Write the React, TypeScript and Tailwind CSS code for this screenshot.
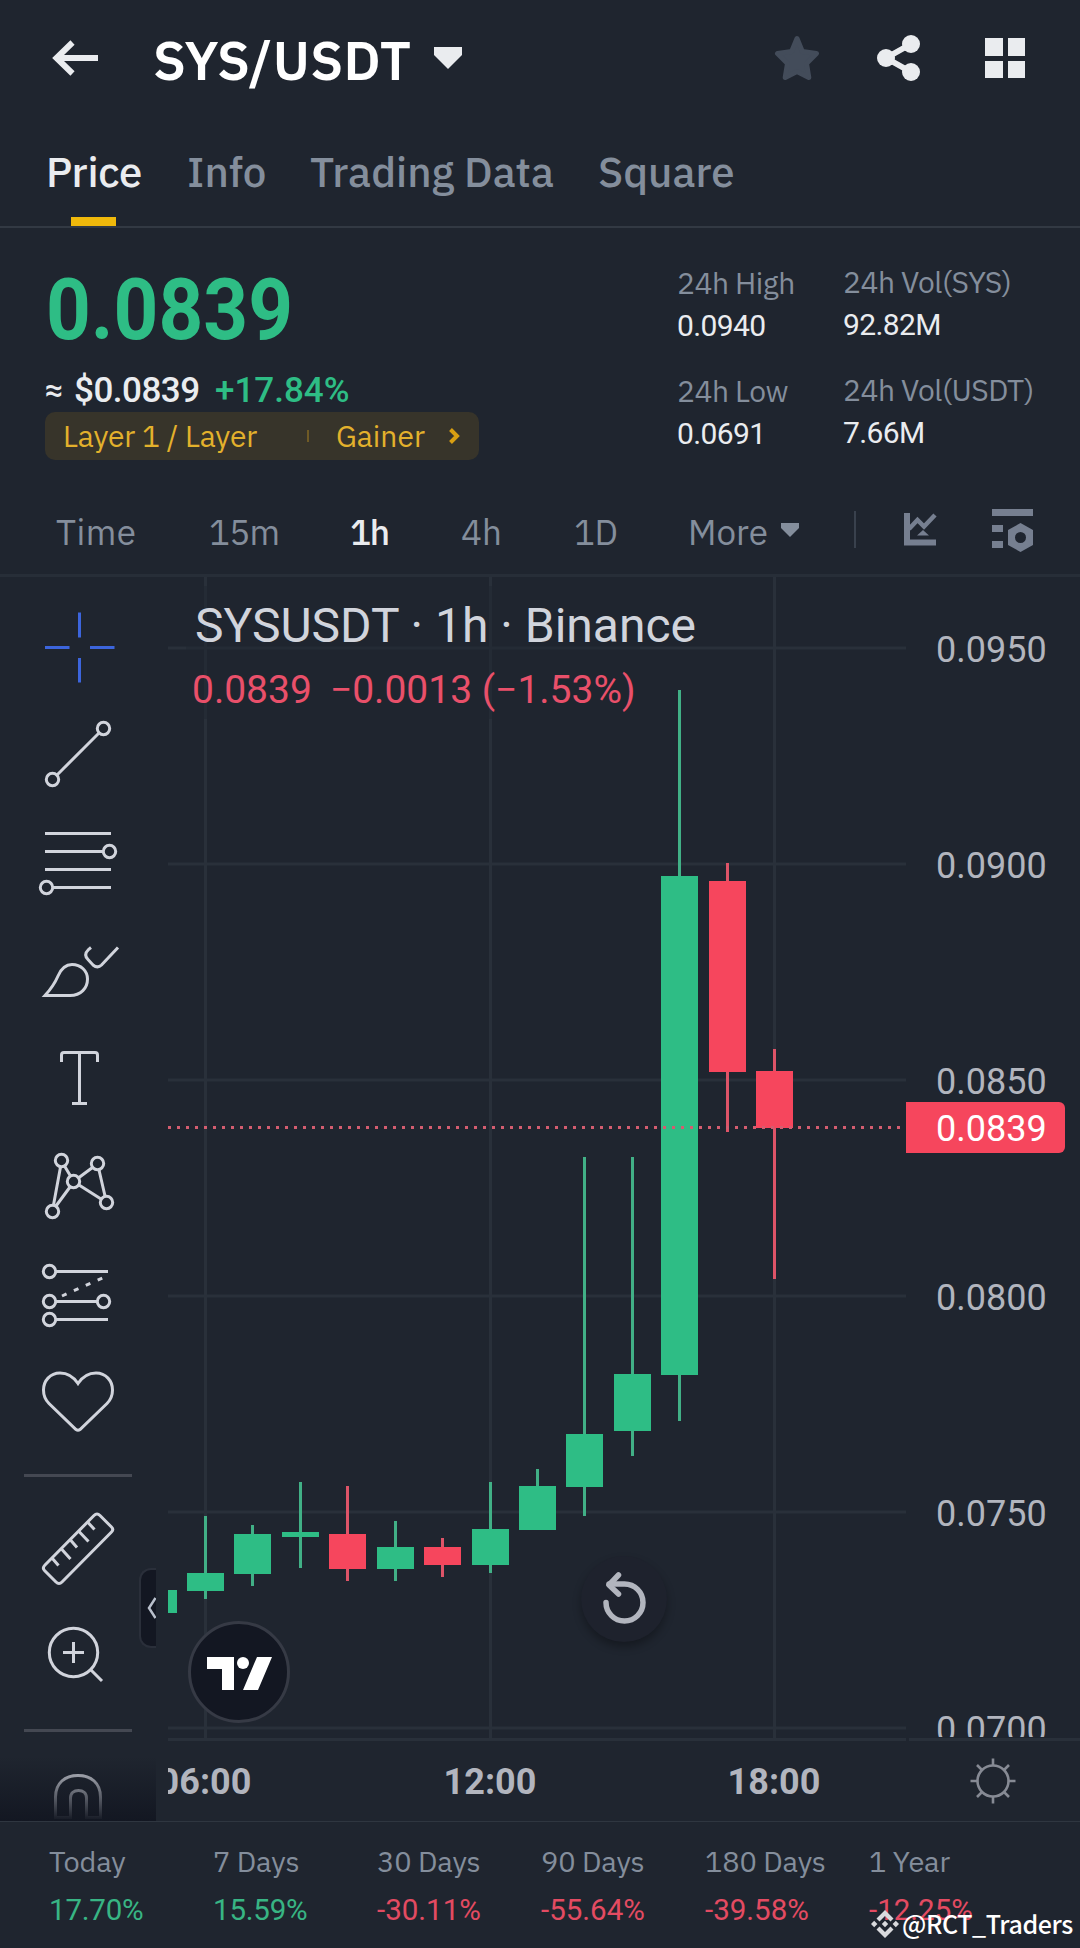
import React from "react";

const PLEX = "font-['IBM_Plex_Sans','Roboto',sans-serif]";
const GRID = "#29303a";
const UP = "#2ebd85";
const DOWN = "#f6465d";

type Candle = { x: number; open: number; close: number; high: number; low: number; up: boolean };

// Body and wick extents in page pixels
const candles: Candle[] = [
  { x: 158, open: 1590, close: 1613, high: 1590, low: 1613, up: true },
  { x: 205, open: 1573, close: 1591, high: 1516, low: 1599, up: true },
  { x: 252, open: 1534, close: 1574, high: 1525, low: 1586, up: true },
  { x: 300, open: 1532, close: 1537, high: 1482, low: 1568, up: true },
  { x: 347, open: 1534, close: 1569, high: 1486, low: 1581, up: false },
  { x: 395, open: 1547, close: 1569, high: 1521, low: 1581, up: true },
  { x: 442, open: 1547, close: 1565, high: 1538, low: 1577, up: false },
  { x: 490, open: 1529, close: 1565, high: 1482, low: 1573, up: true },
  { x: 537, open: 1486, close: 1530, high: 1469, low: 1530, up: true },
  { x: 584, open: 1434, close: 1487, high: 1157, low: 1516, up: true },
  { x: 632, open: 1374, close: 1431, high: 1157, low: 1456, up: true },
  { x: 679, open: 876, close: 1375, high: 690, low: 1421, up: true },
  { x: 727, open: 881, close: 1072, high: 863, low: 1132, up: false },
  { x: 774, open: 1071, close: 1128, high: 1049, low: 1279, up: false },
];

const priceLevels = [
  { y: 648, label: "0.0950" },
  { y: 864, label: "0.0900" },
  { y: 1080, label: "0.0850" },
  { y: 1296, label: "0.0800" },
  { y: 1512, label: "0.0750" },
  { y: 1728, label: "0.0700" },
];

const times = [
  { x: 205, label: "06:00" },
  { x: 490, label: "12:00" },
  { x: 774, label: "18:00" },
];

function Header() {
  return (
    <header className="flex h-[116px] items-center pl-[52px] pr-[55px]">
      <svg className="h-[36px] w-[46px]" viewBox="0 0 46 36" fill="none" stroke="#eaecef" strokeWidth="6">
        <path d="M46 18H5M20.500 2.500L4.500 18L20.500 33.500" />
      </svg>
      <h1 className="ml-[55px] w-[267px] whitespace-nowrap pt-[3px] text-[54px] font-semibold leading-none tracking-[0.3px] text-white">
        SYS/USDT
      </h1>
      <svg className="ml-[14px] h-[22px] w-[28px]" viewBox="0 0 28 22" fill="#eaecef">
        <path d="M0 0H28V8L14 22L0 8Z" />
      </svg>
      <div className="ml-auto flex items-center">
        <svg className="h-[46px] w-[46px]" viewBox="0 0 46 46" fill="#434c5a" stroke="#434c5a" strokeWidth="5" strokeLinejoin="round">
          <path d="M23 3.500L28.300 16.500L42.500 18.500L32.500 28.500L34.800 42.500L23 36.500L11.200 42.500L13.500 28.500L3.500 18.500L17.700 16.500Z" />
        </svg>
        <svg className="ml-[57px] h-[46px] w-[43px]" viewBox="0 0 43 46" fill="#eaecef" stroke="#eaecef">
          <path d="M9 23L34 9M9 23L34 37" strokeWidth="6" />
          <g stroke="none">
            <circle cx="9" cy="23" r="9" />
            <circle cx="34" cy="9" r="9" />
            <circle cx="34" cy="37" r="9" />
          </g>
        </svg>
        <div className="ml-[65px] grid h-[40px] w-[40px] grid-cols-2 gap-[5px]">
          <span className="bg-[#eaecef]" />
          <span className="bg-[#eaecef]" />
          <span className="bg-[#eaecef]" />
          <span className="bg-[#eaecef]" />
        </div>
      </div>
    </header>
  );
}

function Tabs() {
  return (
    <nav className="flex h-[112px] border-b-2 border-[#323943] pl-[46px] text-[42px] font-medium leading-[111px] text-[#848e9c]">
      <div className="relative w-[141px] tracking-[-0.3px] text-[#eaecef]">
        Price
        <span className="absolute bottom-0 left-[25px] h-[9px] w-[45px] bg-[#f0b90b]" />
      </div>
      <div className="w-[123px]">Info</div>
      <div className="w-[288px] whitespace-nowrap">Trading Data</div>
      <div>Square</div>
    </nav>
  );
}

function Stat({ label, value }: { label: string; value: string }) {
  return (
    <div className="h-[108px] whitespace-nowrap text-[30px] leading-[42px]">
      <div className="tracking-[-0.5px] text-[#848e9c]">{label}</div>
      <div className="pt-px font-['Roboto',sans-serif] tracking-[-0.6px] text-[#eaecef]">{value}</div>
    </div>
  );
}

function Summary() {
  return (
    <section className="flex h-[264px] pl-[45px]">
      <div className="w-[632px]">
        <div className="mt-[38px] h-[88px] pl-px font-['Roboto',sans-serif] text-[85px] font-bold leading-[89px] text-[#2ebd85]">
          <span className="inline-block origin-left scale-x-[0.92]">0.0839</span>
        </div>
        <div className="mt-[16px] flex h-[42px] whitespace-nowrap font-['Roboto',sans-serif] text-[35px] font-medium leading-[41px]">
          <span className="w-[29px] text-[32px] text-[#eaecef]">≈</span>
          <span className="w-[141px] tracking-[-0.5px] text-[#eaecef]">$0.0839</span>
          <span className="text-[#2ebd85]">+17.84%</span>
        </div>
        <div className="flex h-[48px] w-[434px] items-center rounded-[10px] bg-[#37342a] pl-[18px] text-[30px] leading-[48px] text-[#e3b12c]">
          <span className="w-[244px] whitespace-nowrap tracking-[-0.2px]">Layer 1 / Layer</span>
          <span className="h-[12px] w-[2px] bg-[#6f5a25]" />
          <span className="ml-[27px] w-[113px]">Gainer</span>
          <svg className="h-[16px] w-[11px]" viewBox="0 0 11 16" fill="none" stroke="#d99f12" strokeWidth="4">
            <path d="M1.500 1.500L8 8L1.500 14.500" />
          </svg>
        </div>
      </div>
      <div className="mt-[34px] w-[166px]">
        <Stat label="24h High" value="0.0940" />
        <Stat label="24h Low" value="0.0691" />
      </div>
      <div className="mt-[33px]">
        <Stat label="24h Vol(SYS)" value="92.82M" />
        <Stat label="24h Vol(USDT)" value="7.66M" />
      </div>
    </section>
  );
}

function Intervals() {
  return (
    <div className="flex h-[85px] items-center border-b-[3px] border-[#272e38] pb-px pl-[56px] text-[35px] text-[#848e9c]">
      <span className="w-[153px] tracking-[0.5px]">Time</span>
      <span className="w-[141px] tracking-[-0.8px]">15m</span>
      <span className="w-[111px] font-medium tracking-[-1.300px] text-[#eaecef]">1h</span>
      <span className="w-[113px]">4h</span>
      <span className="w-[114px] tracking-[-0.5px]">1D</span>
      <span className="w-[93px]">More</span>
      <svg className="mb-[6px] h-[14px] w-[18px]" viewBox="0 0 18 14" fill="#848e9c">
        <path d="M0 0H18V5L9 14L0 5Z" />
      </svg>
      <span className="mb-[6px] ml-[55px] h-[37px] w-[2px] bg-[#39414d]" />
      <svg className="mb-[7px] ml-[48px] h-[33px] w-[34px]" viewBox="0 0 34 33" fill="none" stroke="#767f90">
        <path d="M3 0V29.500H32" strokeWidth="6" />
        <path d="M5 16L13.500 7L20 13.500L31 2" strokeWidth="4.500" />
        <path d="M19 17L25 22.500H13Z" fill="#767f90" stroke="none" />
      </svg>
      <svg className="mb-[4px] ml-[54px] h-[43px] w-[42px]" viewBox="0 0 42 43" fill="#767f90">
        <path d="M0 0H41V7H0ZM0 16H11V23H0ZM0 32H11V39H0Z" />
        <path fillRule="evenodd" d="M28.500 14L41 21V36L28.500 43L16 36V21ZM28.500 23A5.500 5.500 0 1 0 28.500 34A5.500 5.500 0 1 0 28.500 23Z" />
      </svg>
    </div>
  );
}

function Tool({ y, h, children }: { y: number; h: number; children: React.ReactNode }) {
  return (
    <svg
      className="block w-[157px] shrink-0"
      height={h}
      viewBox={`0 ${y} 157 ${h}`}
      fill="none"
      stroke="#d1d4dc"
      strokeWidth="3"
    >
      {children}
    </svg>
  );
}

function Toolbar() {
  return (
    <aside className="relative flex h-[1244px] w-[168px] flex-col overflow-hidden pt-[17px]">
      <Tool y={594} h={108}>
        <path stroke="#3c65dc" d="M79.500 612.500V637.500M79.500 658V682.500M45 647.500H69.500M90 647.500H114.500" />
      </Tool>
      <Tool y={702} h={108}>
        <circle cx="103.500" cy="728.500" r="6.200" />
        <circle cx="52.500" cy="779.500" r="6.200" />
        <path d="M57 775L99 733" />
      </Tool>
      <Tool y={810} h={108}>
        <path d="M45 833.500H111M45 851.500H103M45 869.500H111M53 887.500H111" />
        <circle cx="109.500" cy="851.500" r="6.200" />
        <circle cx="46.500" cy="887.500" r="6.200" />
      </Tool>
      <Tool y={918} h={108}>
        <path d="M45 995.500C50 990 55 983 58 976C61 969 65 964.500 72 964.500C81 964.500 87.500 971 87.500 979C87.500 988 81 995.500 70 995.500Z" />
        <path d="M91 947.500L88.500 949.500C85 953 84.500 956 88 959.500L93 965C96 967.500 99 967.500 101.500 965L118 947.500" />
      </Tool>
      <Tool y={1026} h={108}>
        <path d="M61.500 1062V1055Q61.500 1052.500 64 1052.500H95Q97.500 1052.500 97.500 1055V1062M79.500 1052.500V1103M72 1103.500H87" />
      </Tool>
      <Tool y={1134} h={108}>
        <circle cx="61.500" cy="1160.500" r="6.200" />
        <circle cx="97.500" cy="1163.500" r="6.200" />
        <circle cx="73.500" cy="1181.500" r="6.200" />
        <circle cx="106.500" cy="1202.500" r="6.200" />
        <circle cx="52.500" cy="1211.500" r="6.200" />
        <path d="M60.500 1167L53.500 1205M56 1206L70 1187M64.500 1166L70.500 1176M79 1177.500L92.500 1167.500M99 1170L105 1196M79 1185L101 1199" />
      </Tool>
      <Tool y={1242} h={108}>
        <circle cx="49.500" cy="1271.500" r="6.200" />
        <circle cx="49.500" cy="1301.500" r="6.200" />
        <circle cx="103.500" cy="1301.500" r="6.200" />
        <circle cx="49.500" cy="1319.500" r="6.200" />
        <path d="M56 1271.500H108M56 1301.500H97M56 1319.500H108" />
        <path d="M62 1296L105 1277" strokeDasharray="5 8" />
      </Tool>
      <Tool y={1350} h={108}>
        <path d="M78 1383.500C73 1376 67 1373 60 1373C50 1373 43.500 1381 43.500 1390C43.500 1396 45.500 1400 49 1403.500L76 1429.500Q78 1431 80 1429.500L107 1403.500C110.500 1400 112.500 1396 112.500 1390C112.500 1381 106 1373 96 1373C89 1373 83 1376 78 1383.500Z" />
      </Tool>
      <div className="ml-[24px] mt-[16px] h-[3px] w-[108px] shrink-0 bg-[#444852]" />
      <Tool y={1477} h={119}>
        <path d="M45 1565L94 1515.500Q97 1512.500 100 1515.500L111.500 1527Q114 1529.500 111.500 1532L62 1582Q59 1585 56 1582L44.500 1570.500Q42 1568 45 1565Z" />
        <path d="M52 1558L58.500 1565.500M61.500 1549L70.500 1559M70.500 1540L77 1547.500M79 1531.500L88.500 1541.500M88 1522.500L94.500 1529.500" />
      </Tool>
      <Tool y={1596} h={133}>
        <circle cx="73.500" cy="1652.500" r="24.200" />
        <path d="M73.500 1642V1663M63 1652.500H84M91 1670L102 1681" />
      </Tool>
      <div className="ml-[24px] h-[3px] w-[108px] shrink-0 bg-[#444852]" />
      <Tool y={1732} h={89}>
        <defs>
          <linearGradient id="fade" x1="0" y1="0" x2="0" y2="1">
            <stop offset="0" stopColor="#131722" stopOpacity="0" />
            <stop offset="1" stopColor="#131722" />
          </linearGradient>
        </defs>
        <path d="M55.500 1817.500V1797C55.500 1783 65 1775.500 78 1775.500C91 1775.500 100.500 1783 100.500 1797V1817.500H86.500V1798C86.500 1793 83 1790.500 78.500 1790.500C74 1790.500 70.500 1793 70.500 1798V1817.500Z" />
        <rect x="0" y="1757" width="156" height="64" fill="url(#fade)" stroke="none" />
      </Tool>
      <div className="absolute left-[139px] top-[991px] flex h-[80px] w-[17px] items-center justify-end overflow-hidden rounded-l-[12px] border-2 border-r-0 border-[#2a2f3a] bg-[#131722]">
        <svg className="h-[22px] w-[9px]" viewBox="0 0 9 22" fill="none" stroke="#b9c0cc" strokeWidth="2.500">
          <path d="M8.500 1L2 11L8.500 21" />
        </svg>
      </div>
    </aside>
  );
}

function Chart() {
  return (
    <svg className="block h-[1164px] w-[738px]" viewBox="168 577 738 1164">
      <g fill={GRID}>
        {priceLevels.map((p) => (
          <rect key={p.label} x="168" y={p.y - 1.5} width="738" height="3" />
        ))}
        {times.map((t) => (
          <rect key={t.label} x={t.x - 1} y="577" width="3" height="1164" />
        ))}
        <rect x="168" y="1738" width="738" height="3" />
      </g>
      {candles.map((c) => (
        <g key={c.x}>
          <rect x={c.x - 1} y={c.high} width="3" height={c.low - c.high} fill={c.up ? "#41b086" : "#de5468"} />
          <rect x={c.x - 18} y={c.open} width="37" height={c.close - c.open} fill={c.up ? UP : DOWN} />
        </g>
      ))}
      <path d="M168 1127.500H906" stroke="#d35d70" strokeWidth="3" strokeDasharray="3 6" />
    </svg>
  );
}

function PriceAxis() {
  return (
    <div className="relative h-[1164px] w-[174px]">
      <svg className="block h-[1164px] w-[174px]" viewBox="906 577 174 1164">
        <g fill="#b2b5be" fontSize="36" className="font-['Roboto',sans-serif]">
          {priceLevels.map((p) => (
            <text key={p.label} x="936" y={p.y + 13.5}>
              {p.label}
            </text>
          ))}
        </g>
        <rect x="906" y="1737" width="174" height="4" fill="#1f252f" />
        <rect x="909" y="1738" width="171" height="3" fill={GRID} />
      </svg>
      <div className="absolute left-0 top-[525px] h-[51px] w-[159px] rounded-r-[6px] bg-[#f6465d] pl-[30px] font-['Roboto',sans-serif] text-[36px] leading-[54px] text-white">
        0.0839
      </div>
    </div>
  );
}

function ChartOverlays() {
  return (
    <>
      <div className="absolute left-[18px] top-[9px] w-[454px] whitespace-nowrap bg-[#1f252f]/50 font-['Roboto',sans-serif] text-[#d1d4dc]">
        <div className="pl-[9px] text-[48px] leading-[79px]">SYSUSDT · 1h · Binance</div>
        <div className="h-[54px] whitespace-pre pl-[6px] text-[39px] leading-[50px] text-[#e9506a]">
          <span>0.0839</span>
          <span className="ml-[18px]">−0.0013 (−1.53%)</span>
        </div>
      </div>
      <svg className="absolute left-[20px] top-[1044px] h-[102px] w-[102px]" viewBox="0 0 102 102">
        <circle cx="51" cy="51" r="49.500" fill="#131722" stroke="#363a45" strokeWidth="3" />
        <g fill="#fff">
          <path d="M19 36H46V69H34V48H19ZM69 36H84L70 69H55Z" />
          <circle cx="55" cy="42" r="6" />
        </g>
      </svg>
      <div className="absolute left-[413px] top-[979px] flex h-[86px] w-[86px] items-center justify-center rounded-full bg-[#1e222d] pb-[2px] shadow-[0_5px_8px_rgba(0,0,0,0.3)]">
        <svg className="h-[52px] w-[44px]" viewBox="0 0 44 52" fill="none" stroke="#b2b5be" strokeWidth="5.500" strokeLinecap="round" strokeLinejoin="round">
          <path d="M4 30.500A18.500 18.500 0 1 0 22.500 12H7" />
          <path d="M16.500 3L7 13L16.500 22" />
        </svg>
      </div>
    </>
  );
}

function TimeAxis() {
  return (
    <div className="flex h-[80px] items-center overflow-hidden">
      <svg className="block h-[80px] w-[738px]" viewBox="168 1741 738 80">
        <g fill="#b2b5be" fontSize="36" fontWeight="700" textAnchor="middle" className="font-['Roboto',sans-serif]">
          {times.map((t) => (
            <text key={t.label} x={t.x} y="1793.500">
              {t.label}
            </text>
          ))}
        </g>
      </svg>
      <svg className="ml-[64px] h-[46px] w-[46px]" viewBox="-23 -23 46 46" fill="none" stroke="#868a94" strokeWidth="2.600">
        <circle r="15.500" />
        <path d="M0 -16V-22.500M0 16V22.500M-16 0H-22.500M16 0H22.500M11 -11L16 -16M-11 -11L-16 -16M11 11L16 16M-11 11L-16 16" />
      </svg>
    </div>
  );
}

const periods = [
  { label: "Today", value: "17.70%" },
  { label: "7 Days", value: "15.59%" },
  { label: "30 Days", value: "-30.11%" },
  { label: "90 Days", value: "-55.64%" },
  { label: "180 Days", value: "-39.58%" },
  { label: "1 Year", value: "-12.25%" },
];

function Performance() {
  return (
    <footer className="relative flex h-[127px] border-t border-[#2f3640] pl-[49px] pt-[15px]">
      {periods.map((p) => (
        <div key={p.label} className="w-[164px] shrink-0 whitespace-nowrap text-[29px] leading-[48px]">
          <div className="tracking-[-0.2px] text-[#848e9c]">{p.label}</div>
          <div
            className={
              p.value[0] === "-"
                ? "pt-px font-['Roboto',sans-serif] text-[29.500px] text-[#e34b62]"
                : "pt-px font-['Roboto',sans-serif] text-[29.500px] tracking-[-0.2px] text-[#38b584]"
            }
          >
            {p.value}
          </div>
        </div>
      ))}
      <div className="absolute left-[871px] top-[85px] flex h-[34px] items-center whitespace-nowrap font-['Noto_Sans_CJK_SC',sans-serif] text-[25px] font-medium tracking-[-0.4px] text-white">
        <svg className="h-[28px] w-[28px]" viewBox="-14 -14 28 28" fill="#d9dadd">
          <path d="M0 -14L8.500 -5.500L5.500 -2.500L0 -8L-5.500 -2.500L-8.500 -5.500ZM0 14L8.500 5.500L5.500 2.500L0 8L-5.500 2.500L-8.500 5.500ZM-10.800 -3.200L-7.600 0L-10.800 3.200L-14 0ZM10.800 -3.200L14 0L10.800 3.200L7.600 0ZM0 -3.200L3.200 0L0 3.200L-3.200 0Z" />
        </svg>
        <span className="mb-px ml-[3px]">@RCT_Traders</span>
      </div>
    </footer>
  );
}

export default function App() {
  return (
    <main className={`h-[1948px] w-[1080px] overflow-hidden bg-[#1f252f] ${PLEX}`}>
      <Header />
      <Tabs />
      <Summary />
      <Intervals />
      <div className="flex">
        <Toolbar />
        <div className="relative w-[912px]">
          <div className="flex">
            <Chart />
            <PriceAxis />
          </div>
          <TimeAxis />
          <ChartOverlays />
        </div>
      </div>
      <Performance />
    </main>
  );
}
